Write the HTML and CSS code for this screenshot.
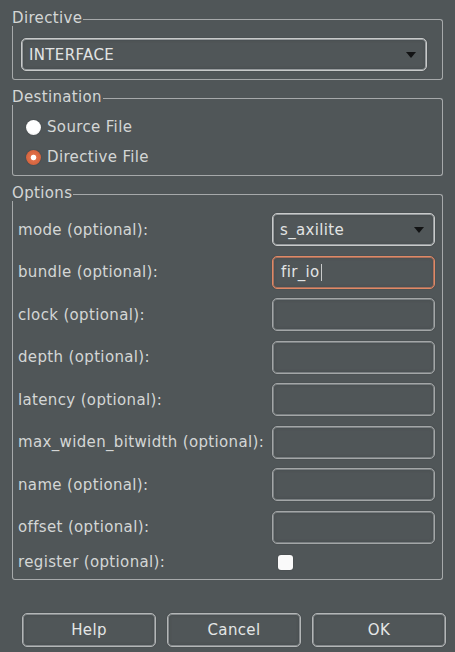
FILE: index.html
```html
<!DOCTYPE html>
<html>
<head>
<meta charset="utf-8">
<link rel="stylesheet" href="styles.css">
</head>
<body>
<div class="dialog">
  <div class="groups">
    <section class="group">
      <div class="group-head"><span class="title">Directive</span><span class="rule"></span></div>
      <div class="group-body directive-body">
        <div class="combo wide"><span>INTERFACE</span><span class="arrow"></span></div>
      </div>
    </section>

    <section class="group">
      <div class="group-head"><span class="title">Destination</span><span class="rule"></span></div>
      <div class="group-body dest-body">
        <div class="radio-row"><span class="radio"></span><span>Source File</span></div>
        <div class="radio-row"><span class="radio checked"></span><span>Directive File</span></div>
      </div>
    </section>

    <section class="group">
      <div class="group-head"><span class="title">Options</span><span class="rule"></span></div>
      <div class="group-body options-body">
        <div class="opt-row"><span class="label">mode (optional):</span><div class="combo"><span>s_axilite</span><span class="arrow"></span></div></div>
        <div class="opt-row"><span class="label">bundle (optional):</span><div class="field focused"><span>fir_io</span><span class="caret"></span></div></div>
        <div class="opt-row"><span class="label">clock (optional):</span><div class="field"></div></div>
        <div class="opt-row"><span class="label">depth (optional):</span><div class="field"></div></div>
        <div class="opt-row"><span class="label">latency (optional):</span><div class="field"></div></div>
        <div class="opt-row"><span class="label">max_widen_bitwidth (optional):</span><div class="field"></div></div>
        <div class="opt-row"><span class="label">name (optional):</span><div class="field"></div></div>
        <div class="opt-row"><span class="label">offset (optional):</span><div class="field"></div></div>
        <div class="opt-row check-row"><span class="label">register (optional):</span><div class="check-cell"><span class="checkbox"></span></div></div>
      </div>
    </section>
  </div>

  <div class="buttons">
    <div class="btn">Help</div>
    <div class="btn">Cancel</div>
    <div class="btn">OK</div>
  </div>
</div>
</body>
</html>
```

FILE: styles.css
```css
html, body {
  margin: 0;
  padding: 0;
  background: #505658;
}
body {
  width: 455px;
  height: 652px;
  overflow: hidden;
  font-family: "DejaVu Sans", "Liberation Sans", sans-serif;
  font-size: 15px;
  letter-spacing: 0.35px;
  color: #d4d6d6;
}
.dialog {
  display: flex;
  flex-direction: column;
}
.groups {
  display: flex;
  flex-direction: column;
  gap: 9px;
  padding: 10px 12px 0 12px;
}
.group-head {
  display: flex;
  height: 16px;
}
.title {
  line-height: 16px;
  padding-right: 1px;
}
.rule {
  flex: 1;
  margin-top: 9px;
  border-top: 1px solid #a6a9aa;
  border-right: 1px solid #a6a9aa;
  border-top-right-radius: 3px;
}
.group-body {
  border: 1px solid #a6a9aa;
  border-top: none;
  border-bottom-left-radius: 3px;
  border-bottom-right-radius: 3px;
}
.directive-body {
  padding: 12px 15px 8px 8px;
}
.combo {
  box-sizing: border-box;
  height: 33px;
  display: flex;
  align-items: center;
  justify-content: space-between;
  padding: 0 10px 0 7px;
  border: 1px solid #c8caca;
  border-radius: 5px;
  box-shadow: inset 0 0 0 1px #979b9d, inset 0 0 3px 1px #43484a, 0 0 1px #2e3234;
  color: #e2e4e4;
}
.arrow {
  width: 0;
  height: 0;
  border-left: 5px solid transparent;
  border-right: 5px solid transparent;
  border-top: 6px solid #121314;
  margin-top: 1px;
}
.dest-body {
  padding: 12px 8px 8px 13px;
  display: flex;
  flex-direction: column;
  gap: 10px;
}
.radio-row {
  height: 20px;
  display: flex;
  align-items: center;
  gap: 6px;
}
.radio {
  width: 15px;
  height: 15px;
  border-radius: 50%;
  background: radial-gradient(circle at 50% 45%, #ffffff 55%, #d6d6d6 100%);
  box-shadow: 0 0 1px #2a2e30;
}
.radio.checked {
  background: radial-gradient(circle, #ffffff 0 2.4px, #e0704a 3.2px, #cc5a34 100%);
}
.options-body {
  padding: 12px 7px 8px 5px;
  display: grid;
  grid-template-columns: 1fr 163px;
  row-gap: 9.5px;
}
.opt-row {
  display: contents;
}
.label {
  display: flex;
  align-items: center;
  height: 33px;
  white-space: nowrap;
}
.field {
  box-sizing: border-box;
  height: 33px;
  border: 1px solid #a3a6a7;
  border-radius: 5px;
  box-shadow: inset 0 0 0 1px #7b8082, inset 0 0 3px 1px #464b4d, 0 0 1px #2e3234;
  display: flex;
  align-items: center;
  padding-left: 8px;
  color: #e2e4e4;
}
.field.focused {
  border-color: #df8966;
  box-shadow: inset 0 0 0 1px #a8705c, inset 0 0 3px 1px #464b4d, 0 0 1px #2e3234;
}
.caret {
  display: inline-block;
  width: 0;
  height: 17px;
  border-left: 1px solid #c8caca;
  margin-left: 1px;
}
.check-row .label {
  height: 18px;
}
.check-cell {
  height: 18px;
  display: flex;
  align-items: center;
  padding-left: 6px;
}
.checkbox {
  width: 15px;
  height: 15px;
  border-radius: 3px;
  background: #fafafa;
  box-shadow: 0 0 1px #2a2e30;
}
.buttons {
  display: flex;
  gap: 11px;
  padding: 0 9px 0 22px;
  margin-top: 33px;
}
.btn {
  box-sizing: border-box;
  width: 134px;
  height: 34px;
  display: flex;
  align-items: center;
  justify-content: center;
  border: 1px solid #b3b6b7;
  border-radius: 5px;
  box-shadow: inset 0 0 0 1px #868a8c, inset 0 0 3px 1px #43484a, 0 0 1px #2e3234;
  color: #e4e6e6;
}
```
